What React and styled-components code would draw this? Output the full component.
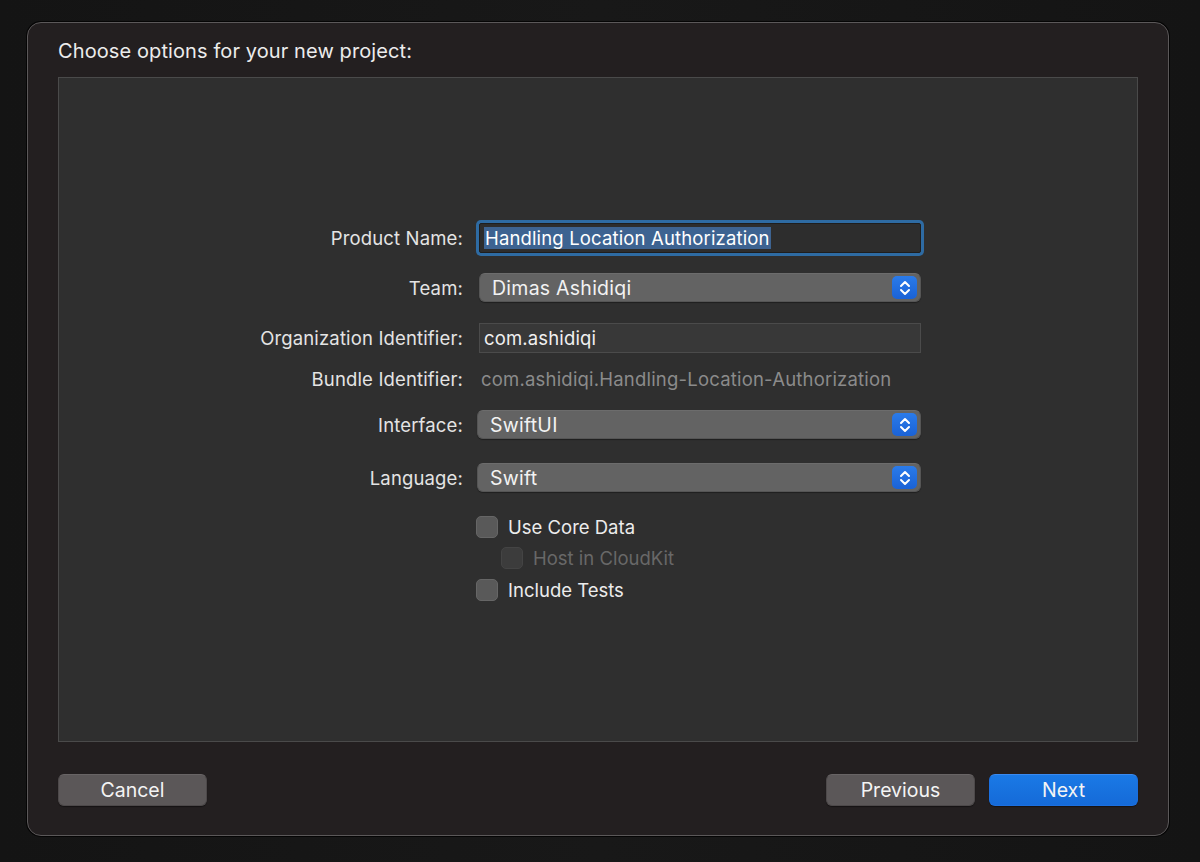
import React from "react";
import styled, { createGlobalStyle } from "styled-components";

const Global = createGlobalStyle`
  html, body { margin: 0; padding: 0; background: #161616; }
  body { font-family: "Inter", "Noto Sans", "Liberation Sans", sans-serif; -webkit-font-smoothing: antialiased; }
  * { box-sizing: border-box; }
`;

const Page = styled.div`
  width: 1200px;
  height: 862px;
  padding: 22px 31px 26px 27px;
  background: linear-gradient(90deg, #141414, #181818 50%, #141414);
`;

const Window = styled.div`
  width: 1142px;
  height: 814px;
  background: #231f20;
  border: 1px solid #5b5859;
  border-radius: 14px;
  box-shadow: 0 0 0 1px #050505;
  padding: 0 30px 0 30px;
  display: flex;
  flex-direction: column;
`;

const Title = styled.div`
  color: #ececec;
  font-size: 20px;
  letter-spacing: 0.1px;
  height: 54px;
  line-height: 20px;
  padding-top: 18px;
`;

const Panel = styled.div`
  height: 665px;
  background: #2f2f2f;
  border: 1px solid #4a4a4a;
  padding-top: 145px;
  display: flex;
  flex-direction: column;
`;

const Row = styled.div`
  display: grid;
  grid-template-columns: 404px 442px;
  column-gap: 16px;
  align-items: center;
  margin-top: ${(p) => p.$mt || 0}px;
  height: ${(p) => p.$h}px;
`;

const Label = styled.div`
  text-align: right;
  color: #e4e4e4;
  font-size: 18.5px;
  letter-spacing: 0.15px;
`;

const TextField = styled.div`
  height: 30px;
  background: ${(p) => (p.$focused ? "#2d2d2d" : "#383838")};
  border: 1px solid ${(p) => (p.$focused ? "#1e1e1e" : "#4b4b4b")};
  box-shadow: ${(p) => (p.$focused ? "0 0 0 3px #2e6ba3" : "none")};
  border-radius: ${(p) => (p.$focused ? "2px" : "0")};
  display: flex;
  align-items: center;
  padding-left: 4px;
  color: #f0f0f0;
  font-size: 18.5px;
  letter-spacing: 0.15px;
`;

const Selection = styled.span`
  background: #3d6391;
  color: #ffffff;
  line-height: 22px;
  padding: 0 1px;
`;

const Popup = styled.div`
  height: 29px;
  margin-left: ${(p) => p.$ml || 0}px;
  background: #636363;
  border: 1px solid #555;
  border-top-color: #6c6c6c;
  border-radius: 6px;
  box-shadow: 0 1px 1px rgba(0,0,0,0.35);
  display: flex;
  align-items: center;
  justify-content: space-between;
  padding: 0 3px 0 12px;
  color: #f2f2f2;
  font-size: 19.5px;
  letter-spacing: 0.25px;
`;

const Stepper = styled.div`
  width: 25px;
  height: 23px;
  border-radius: 5px;
  background: linear-gradient(#2a7bea, #1a62d6);
  display: flex;
  align-items: center;
  justify-content: center;
`;

const Static = styled.div`
  color: #8b8b8b;
  font-size: 18.5px;
  letter-spacing: 0.2px;
  padding-left: 2px;
`;

const CheckRow = styled.div`
  display: flex;
  align-items: center;
  gap: 10px;
  height: 22px;
  margin-top: ${(p) => p.$mt}px;
  margin-left: ${(p) => 475 + (p.$indent ? 25 : 0) - 58}px;
  color: ${(p) => (p.$disabled ? "#686868" : "#ececec")};
  font-size: 18.5px;
`;

const Box = styled.div`
  width: 22px;
  height: 22px;
  border-radius: 5px;
  background: ${(p) => (p.$disabled ? "#3c3c3c" : "#595959")};
  border: 1px solid ${(p) => (p.$disabled ? "#444" : "#666")};
`;

const Footer = styled.div`
  display: flex;
  align-items: center;
  padding-top: 32px;
  gap: 14px;
`;

const Spacer = styled.div`
  flex: 1;
`;

const Button = styled.button`
  width: 149px;
  height: 32px;
  border-radius: 6px;
  border: 1px solid ${(p) => (p.$primary ? "#1b6fe0" : "#4d494a")};
  border-top-color: ${(p) => (p.$primary ? "#3a8af0" : "#686465")};
  background: ${(p) => (p.$primary ? "linear-gradient(#1a79e6, #156ad8)" : "#5b5758")};
  color: #f4f4f4;
  font-family: inherit;
  font-size: 19.5px;
  box-shadow: 0 1px 1px rgba(0,0,0,0.4);
  padding: 0;
`;

const Chevrons = () => (
  <svg width="14" height="18" viewBox="0 0 14 18" fill="none" stroke="#fff" strokeWidth="2" strokeLinecap="round" strokeLinejoin="round">
    <path d="M3 7 L7 3 L11 7" />
    <path d="M3 11 L7 15 L11 11" />
  </svg>
);

export default function App() {
  return (
    <>
      <Global />
      <Page>
        <Window>
          <Title>Choose options for your new project:</Title>
          <Panel>
            <Row $h={30}>
              <Label>Product Name:</Label>
              <TextField $focused>
                <Selection>Handling Location Authorization</Selection>
              </TextField>
            </Row>
            <Row $h={29} $mt={20}>
              <Label>Team:</Label>
              <Popup>
                Dimas Ashidiqi
                <Stepper><Chevrons /></Stepper>
              </Popup>
            </Row>
            <Row $h={31} $mt={20}>
              <Label>Organization Identifier:</Label>
              <TextField>com.ashidiqi</TextField>
            </Row>
            <Row $h={22} $mt={15}>
              <Label>Bundle Identifier:</Label>
              <Static>com.ashidiqi.Handling-Location-Authorization</Static>
            </Row>
            <Row $h={29} $mt={20}>
              <Label>Interface:</Label>
              <Popup $ml={-2}>
                SwiftUI
                <Stepper><Chevrons /></Stepper>
              </Popup>
            </Row>
            <Row $h={29} $mt={24}>
              <Label>Language:</Label>
              <Popup $ml={-2}>
                Swift
                <Stepper><Chevrons /></Stepper>
              </Popup>
            </Row>
            <CheckRow $mt={24}>
              <Box />
              Use Core Data
            </CheckRow>
            <CheckRow $mt={9} $indent $disabled>
              <Box $disabled />
              Host in CloudKit
            </CheckRow>
            <CheckRow $mt={10}>
              <Box />
              Include Tests
            </CheckRow>
          </Panel>
          <Footer>
            <Button>Cancel</Button>
            <Spacer />
            <Button>Previous</Button>
            <Button $primary>Next</Button>
          </Footer>
        </Window>
      </Page>
    </>
  );
}
